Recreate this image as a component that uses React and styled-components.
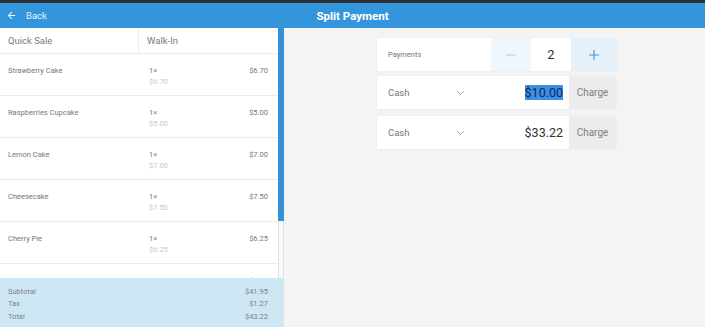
import React from 'react';
import styled, { createGlobalStyle } from 'styled-components';

const items = [
  { name: 'Strawberry Cake', qty: '1×', unit: '$6.70', price: '$6.70' },
  { name: 'Raspberries Cupcake', qty: '1×', unit: '$5.00', price: '$5.00' },
  { name: 'Lemon Cake', qty: '1×', unit: '$7.00', price: '$7.00' },
  { name: 'Cheesecake', qty: '1×', unit: '$7.50', price: '$7.50' },
  { name: 'Cherry Pie', qty: '1×', unit: '$6.25', price: '$6.25' },
  { name: 'Macaron', qty: '1×', unit: '$4.00', price: '$4.00' },
];

const totals = [
  { label: 'Subtotal', value: '$41.95' },
  { label: 'Tax', value: '$1.27' },
  { label: 'Total', value: '$43.22' },
];

const payments = [
  { method: 'Cash', amount: '$10.00', selected: true },
  { method: 'Cash', amount: '$33.22', selected: false },
];

export default function App() {
  return (
    <>
      <GlobalStyle />
      <Screen>
        <TopStrip />
        <Header>
          <BackButton>
            <svg width="11" height="11" viewBox="0 0 24 24">
              <path d="M20 11H7.83l5.59-5.59L12 4l-8 8 8 8 1.41-1.41L7.83 13H20v-2z" fill="#fff" />
            </svg>
            <span>Back</span>
          </BackButton>
          <Title>Split Payment</Title>
        </Header>
        <Main>
          <LeftPanel>
            <ScrollArea>
              <ListColumn>
                <Tabs>
                  <Tab>Quick Sale</Tab>
                  <Tab divider>Walk-In</Tab>
                </Tabs>
                <List>
                  {items.map((item) => (
                    <ItemRow key={item.name}>
                      <ItemName>{item.name}</ItemName>
                      <QtyCol>
                        <span>{item.qty}</span>
                        <UnitPrice>{item.unit}</UnitPrice>
                      </QtyCol>
                      <Price>{item.price}</Price>
                    </ItemRow>
                  ))}
                </List>
              </ListColumn>
              <ScrollTrack>
                <ScrollThumb />
              </ScrollTrack>
            </ScrollArea>
            <Footer>
              {totals.map((t) => (
                <TotalRow key={t.label}>
                  <span>{t.label}</span>
                  <span>{t.value}</span>
                </TotalRow>
              ))}
            </Footer>
          </LeftPanel>
          <RightPanel>
            <Cards>
              <Card>
                <CardLabel>Payments</CardLabel>
                <StepButton tone="#eff7fc">
                  <svg width="10" height="10" viewBox="0 0 10 10">
                    <path d="M0 5h10" stroke="#a9cce3" strokeWidth="1" />
                  </svg>
                </StepButton>
                <Count>2</Count>
                <StepButton tone="#e4f1fb" wide>
                  <svg width="10" height="10" viewBox="0 0 10 10">
                    <path d="M0 5h10M5 0v10" stroke="#4a90c8" strokeWidth="1.1" />
                  </svg>
                </StepButton>
              </Card>
              {payments.map((p, i) => (
                <Card key={i} gapTop={i === 0 ? 5 : 7}>
                  <Method>
                    <span>{p.method}</span>
                    <svg width="9" height="6" viewBox="0 0 9 6">
                      <path d="M1 1l3.5 3.5L8 1" stroke="#aaa" strokeWidth="1" fill="none" />
                    </svg>
                  </Method>
                  <Amount>
                    <AmountText selected={p.selected}>{p.amount}</AmountText>
                  </Amount>
                  <ChargeButton>Charge</ChargeButton>
                </Card>
              ))}
            </Cards>
          </RightPanel>
        </Main>
      </Screen>
    </>
  );
}

const GlobalStyle = createGlobalStyle`
  html, body {
    margin: 0;
    padding: 0;
    background: #f4f4f4;
  }
  body {
    font-family: Roboto, "Liberation Sans", sans-serif;
  }
`;

const Screen = styled.div`
  width: 705px;
  height: 327px;
  display: flex;
  flex-direction: column;
  overflow: hidden;
  background: #f4f4f4;
`;

const TopStrip = styled.div`
  height: 3px;
  background: #2d3035;
`;

const Header = styled.div`
  height: 25px;
  background: #3396dc;
  display: grid;
  grid-template-columns: 1fr auto 1fr;
  align-items: center;
`;

const BackButton = styled.div`
  display: flex;
  align-items: center;
  gap: 9px;
  padding-left: 6px;
  color: #e3f0fa;
  font-size: 9.5px;
`;

const Title = styled.div`
  color: #fff;
  font-weight: 700;
  font-size: 11.5px;
`;

const Main = styled.div`
  flex: 1;
  display: grid;
  grid-template-columns: 284px 1fr;
  min-height: 0;
`;

const LeftPanel = styled.div`
  display: flex;
  flex-direction: column;
  min-height: 0;
`;

const ScrollArea = styled.div`
  flex: 1;
  display: flex;
  min-height: 0;
  overflow: hidden;
`;

const ListColumn = styled.div`
  width: 278px;
  background: #fff;
  display: flex;
  flex-direction: column;
  overflow: hidden;
`;

const Tabs = styled.div`
  height: 25px;
  flex-shrink: 0;
  display: grid;
  grid-template-columns: 138px 1fr;
  border-bottom: 1px solid #ececec;
`;

const Tab = styled.div`
  display: flex;
  align-items: center;
  padding-left: 8px;
  font-size: 9.5px;
  color: #7a7a7a;
  border-left: ${({ divider }) => (divider ? '1px solid #ececec' : 'none')};
`;

const List = styled.div`
  display: flex;
  flex-direction: column;
`;

const ItemRow = styled.div`
  height: 42px;
  flex-shrink: 0;
  box-sizing: border-box;
  border-bottom: 1px solid #ececec;
  display: grid;
  grid-template-columns: 141px 1fr auto;
  padding: 12px 10px 0 8px;
  font-size: 7.5px;
  color: #777;
`;

const ItemName = styled.div`
  line-height: 10px;
`;

const QtyCol = styled.div`
  display: flex;
  flex-direction: column;
  line-height: 10px;
  gap: 1px;
`;

const UnitPrice = styled.span`
  color: #c8c8c8;
`;

const Price = styled.div`
  line-height: 10px;
`;

const ScrollTrack = styled.div`
  width: 6px;
  box-sizing: border-box;
  border-left: 1px solid #e0e0e0;
  border-right: 1px solid #e0e0e0;
  background: #fafafa;
`;

const ScrollThumb = styled.div`
  height: 193px;
  margin: 0 -1px;
  background: #3592d6;
`;

const Footer = styled.div`
  height: 49px;
  flex-shrink: 0;
  box-sizing: border-box;
  background: #cde8f4;
  padding: 8px 16px 0 8px;
  display: flex;
  flex-direction: column;
`;

const TotalRow = styled.div`
  display: flex;
  justify-content: space-between;
  font-size: 7.5px;
  line-height: 12.3px;
  color: #808080;
`;

const RightPanel = styled.div`
  padding: 10px 0 0 93px;
`;

const Cards = styled.div`
  width: 239px;
  display: flex;
  flex-direction: column;
`;

const Card = styled.div`
  height: 33px;
  margin-top: ${({ gapTop }) => (gapTop ? `${gapTop}px` : '0')};
  background: #fff;
  box-shadow: 0 0 1px rgba(0, 0, 0, 0.12);
  display: flex;
  align-items: stretch;
`;

const CardLabel = styled.div`
  width: 114px;
  box-sizing: border-box;
  display: flex;
  align-items: center;
  padding-left: 11px;
  font-size: 7.5px;
  color: #777;
`;

const StepButton = styled.div`
  width: ${({ wide }) => (wide ? '45px' : '40px')};
  background: ${({ tone }) => tone};
  display: flex;
  align-items: center;
  justify-content: center;
`;

const Count = styled.div`
  width: 40px;
  display: flex;
  align-items: center;
  justify-content: center;
  font-size: 13px;
  color: #333;
`;

const Method = styled.div`
  width: 92px;
  box-sizing: border-box;
  display: flex;
  align-items: center;
  justify-content: space-between;
  padding: 0 4px 0 11px;
  font-size: 9.5px;
  color: #777;
`;

const Amount = styled.div`
  flex: 1;
  display: flex;
  align-items: center;
  justify-content: flex-end;
  padding-right: 6px;
`;

const AmountText = styled.span`
  font-size: 12.5px;
  color: ${({ selected }) => (selected ? '#0d2a55' : '#333')};
  background: ${({ selected }) => (selected ? '#3f8ee6' : 'transparent')};
`;

const ChargeButton = styled.div`
  width: 47px;
  background: #ececec;
  display: flex;
  align-items: center;
  justify-content: center;
  font-size: 10px;
  color: #808080;
`;
